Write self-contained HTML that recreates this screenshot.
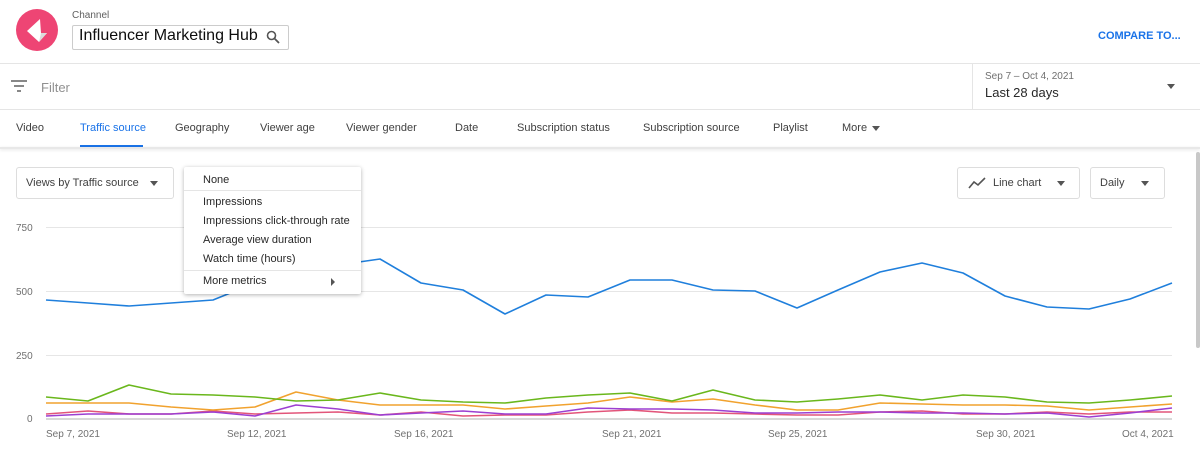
<!DOCTYPE html>
<html><head><meta charset="utf-8"><style>
*{margin:0;padding:0;box-sizing:border-box}
body{width:1200px;height:454px;overflow:hidden;background:#fff;font-family:"Liberation Sans",Roboto,sans-serif;color:#282828;position:relative}
.abs{position:absolute}
.t{font-size:12px;color:#606060;white-space:nowrap}
</style></head><body>
<!-- header -->
<div class="abs" style="left:16px;top:9px;width:42px;height:42px;border-radius:50%;background:#ee4574"></div>
<svg class="abs" style="left:16px;top:9px" width="42" height="42" viewBox="0 0 42 42"><path d="M24 10 L11 22 L23 33 L31 24 L25 24 Z" fill="#fff"/><path d="M25 24 L31 24 L23 33 Z" fill="#dcdcdc"/></svg>
<div class="abs" style="left:72px;top:10px;font-size:10px;color:#606060">Channel</div>
<div class="abs" style="left:72px;top:25px;width:217px;height:25px;border:1px solid #ccc;border-radius:2px"></div>
<div class="abs" style="left:79px;top:27px;font-size:16px;color:#0d0d0d;font-weight:500">Influencer Marketing Hub</div>
<svg class="abs" style="left:266px;top:30px" width="14" height="14" viewBox="0 0 14 14"><circle cx="5.5" cy="5.5" r="4" fill="none" stroke="#555" stroke-width="1.6"/><path d="M8.5 8.5L13 13" stroke="#555" stroke-width="1.8"/></svg>
<div class="abs" style="left:1098px;top:30px;font-size:11px;color:#1a73e8;font-weight:bold">COMPARE TO...</div>
<div class="abs" style="left:0;top:63px;width:1200px;height:1px;background:#e5e5e5"></div>
<!-- filter row -->
<svg class="abs" style="left:11px;top:80px" width="16" height="12"><path d="M0 1h16M3 6h10M6 11h4" stroke="#606060" stroke-width="1.6"/></svg>
<div class="abs" style="left:41px;top:80px;font-size:13px;color:#909090">Filter</div>
<div class="abs" style="left:972px;top:64px;width:1px;height:45px;background:#e5e5e5"></div>
<div class="abs" style="left:985px;top:71px;font-size:10px;color:#707070">Sep 7 – Oct 4, 2021</div>
<div class="abs" style="left:985px;top:85px;font-size:13px;color:#282828">Last 28 days</div>
<div class="abs" style="left:1167px;top:84px;border-left:4px solid transparent;border-right:4px solid transparent;border-top:5px solid #555"></div>
<div class="abs" style="left:0;top:109px;width:1200px;height:1px;background:#e5e5e5"></div>
<!-- tabs -->
<div class="abs" style="top:122px;left:0;font-size:11px;color:#404040;width:1200px">
<span class="abs" style="left:16px">Video</span>
<span class="abs" style="left:80px;color:#1a73e8">Traffic source</span>
<span class="abs" style="left:175px">Geography</span>
<span class="abs" style="left:260px">Viewer age</span>
<span class="abs" style="left:346px">Viewer gender</span>
<span class="abs" style="left:455px">Date</span>
<span class="abs" style="left:517px">Subscription status</span>
<span class="abs" style="left:643px">Subscription source</span>
<span class="abs" style="left:773px">Playlist</span>
<span class="abs" style="left:842px">More</span>
</div>
<div class="abs" style="left:872px;top:126px;border-left:4px solid transparent;border-right:4px solid transparent;border-top:5px solid #555"></div>
<div class="abs" style="left:80px;top:145px;width:63px;height:2px;background:#1a73e8"></div>
<div class="abs" style="left:0;top:147px;width:1200px;height:2px;background:#e8e8e8;box-shadow:0 1px 3px rgba(0,0,0,.12)"></div>
<div class="abs" style="left:1196px;top:152px;width:4px;height:196px;background:#c8c8c8;border-radius:2px"></div>
<!-- controls -->
<div class="abs" style="left:16px;top:167px;width:158px;height:32px;border:1px solid #ddd;border-radius:3px"></div>
<div class="abs t" style="left:26px;top:177px;color:#404040;font-size:11px">Views by Traffic source</div>
<div class="abs" style="left:150px;top:181px;border-left:4px solid transparent;border-right:4px solid transparent;border-top:5px solid #555"></div>
<div class="abs" style="left:957px;top:167px;width:123px;height:32px;border:1px solid #ddd;border-radius:3px"></div>
<svg class="abs" style="left:968px;top:177px" width="18" height="12"><path d="M1 11L6 5L10 8L17 1" fill="none" stroke="#555" stroke-width="1.6"/></svg>
<div class="abs t" style="left:993px;top:177px;color:#404040;font-size:11px">Line chart</div>
<div class="abs" style="left:1057px;top:181px;border-left:4px solid transparent;border-right:4px solid transparent;border-top:5px solid #555"></div>
<div class="abs" style="left:1090px;top:167px;width:75px;height:32px;border:1px solid #ddd;border-radius:3px"></div>
<div class="abs t" style="left:1100px;top:177px;color:#404040;font-size:11px">Daily</div>
<div class="abs" style="left:1141px;top:181px;border-left:4px solid transparent;border-right:4px solid transparent;border-top:5px solid #555"></div>
<!-- chart -->
<svg class="abs" style="left:0;top:0" width="1200" height="454">
<g stroke="#e6e6e6" stroke-width="1"><line x1="46" y1="227.5" x2="1172" y2="227.5"/><line x1="46" y1="291.5" x2="1172" y2="291.5"/><line x1="46" y1="355.5" x2="1172" y2="355.5"/></g>
<line x1="46" y1="419" x2="1172" y2="419" stroke="#ccc" stroke-width="1.5"/>
<g font-family="Liberation Sans,sans-serif" font-size="10" fill="#707070">
<text x="16" y="231">750</text><text x="16" y="295">500</text><text x="16" y="359">250</text><text x="27" y="422">0</text>
<text x="46" y="437">Sep 7, 2021</text><text x="227" y="437">Sep 12, 2021</text><text x="394" y="437">Sep 16, 2021</text><text x="602" y="437">Sep 21, 2021</text><text x="768" y="437">Sep 25, 2021</text><text x="976" y="437">Sep 30, 2021</text><text x="1122" y="437">Oct 4, 2021</text>
</g>
<g fill="none" stroke-width="1.6" stroke-linejoin="round">
<polyline stroke="#e2557a" points="46,414 88,411 129,414 171,414 213,411 255,414 296,413 338,412 380,415 421,412 463,416 505,415 546,415 588,412 630,410 672,413 713,413 755,414 797,415 838,415 880,412 922,411 963,414 1005,414 1047,412 1089,414 1130,412 1172,412"/>
<polyline stroke="#9c3fd1" points="46,416 88,414 129,414 171,414 213,412 255,416 296,405 338,409 380,415 421,413 463,411 505,414 546,414 588,408 630,409 672,409 713,410 755,413 797,413 838,412 880,412 922,413 963,413 1005,414 1047,413 1089,417 1130,413 1172,408"/>
<polyline stroke="#f1a22e" points="46,403 88,403 129,403 171,407 213,410 255,407 296,392 338,400 380,405 421,405 463,405 505,409 546,406 588,403 630,397 672,402 713,399 755,405 797,410 838,410 880,403 922,404 963,405 1005,405 1047,406 1089,410 1130,407 1172,404"/>
<polyline stroke="#6ab71c" points="46,397 88,401 129,385 171,394 213,395 255,397 296,401 338,400 380,393 421,400 463,402 505,403 546,398 588,395 630,393 672,401 713,390 755,400 797,402 838,399 880,395 922,400 963,395 1005,397 1047,402 1089,403 1130,400 1172,396"/>
<polyline stroke="#1f7fdc" points="46,300 88,303 129,306 171,303 213,300 255,283 296,270 338,265 380,259 421,283 463,290 505,314 546,295 588,297 630,280 672,280 713,290 755,291 797,308 838,290 880,272 922,263 963,273 1005,296 1047,307 1089,309 1130,299 1172,283"/>
</g>
</svg>
<!-- menu -->
<div class="abs" style="left:184px;top:167px;width:177px;height:127px;background:#fff;border-radius:2px;box-shadow:0 1px 4px rgba(0,0,0,.3)">
<div class="abs t" style="left:19px;top:7px;color:#282828;font-size:11px">None</div>
<div class="abs" style="left:0;top:23px;width:177px;height:1px;background:#e5e5e5"></div>
<div class="abs t" style="left:19px;top:29px;color:#282828;font-size:11px">Impressions</div>
<div class="abs t" style="left:19px;top:48px;color:#282828;font-size:11px">Impressions click-through rate</div>
<div class="abs t" style="left:19px;top:67px;color:#282828;font-size:11px">Average view duration</div>
<div class="abs t" style="left:19px;top:86px;color:#282828;font-size:11px">Watch time (hours)</div>
<div class="abs" style="left:0;top:103px;width:177px;height:1px;background:#e5e5e5"></div>
<div class="abs t" style="left:19px;top:108px;color:#282828;font-size:11px">More metrics</div>
<div class="abs" style="left:147px;top:111px;border-top:4px solid transparent;border-bottom:4px solid transparent;border-left:4px solid #555"></div>
</div>
</body></html>
